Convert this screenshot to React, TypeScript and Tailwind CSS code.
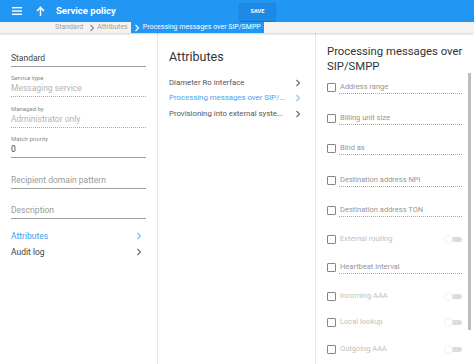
import React from "react";

const attributes = [
  { name: "Diameter Ro interface" },
  { name: "Processing messages over SIP/...", active: true },
  { name: "Provisioning into external syste..." },
];

// gap above each row keeps the uneven rhythm of the list
const options = [
  { name: "Address range", kind: "input", gap: "mt-0" },
  { name: "Billing unit size", kind: "input", gap: "mt-[17px]" },
  { name: "Bind as", kind: "input", gap: "mt-[16px]" },
  { name: "Destination address NPI", kind: "input", gap: "mt-[18px]" },
  { name: "Destination address TON", kind: "input", gap: "mt-[16px]" },
  { name: "External routing", kind: "toggle", gap: "mt-[15px]" },
  { name: "Heartbeat interval", kind: "input", gap: "mt-[14px]" },
  { name: "Incoming AAA", kind: "toggle", gap: "mt-[15px]" },
  { name: "Local lookup", kind: "toggle", gap: "mt-[12px]" },
  { name: "Outgoing AAA", kind: "toggle", gap: "mt-[13px]" },
];

const Chevron = ({ className = "" }: { className?: string }) => (
  <svg width="6" height="8" viewBox="0 0 6 8" className={className}>
    <path d="M1.5 1 L4.5 4 L1.5 7" fill="none" stroke="currentColor" strokeWidth="1.1" />
  </svg>
);

const Checkbox = () => (
  <div className="w-[9px] h-[9px] shrink-0 rounded-[1px] border border-[#858585]" />
);

const Toggle = () => (
  <div className="relative w-[18px] h-[9px] shrink-0">
    <div className="absolute left-[5px] right-0 top-[2px] h-[5px] rounded-full bg-[#dcdcdc]" />
    <div className="absolute left-0 top-0 w-[9px] h-[9px] rounded-full bg-white border border-[#f0f0f0]" />
  </div>
);

const ReadOnly = ({ label, value, gap }: { label: string; value: string; gap: string }) => (
  <div className={gap}>
    <div className="text-[6px] text-[#8a8a8a] leading-[10px]">{label}</div>
    <div className="text-[8.5px] text-[#b3b3b3] leading-[11px] pb-[2px] border-b border-dotted border-[#a8a8a8]">{value}</div>
  </div>
);

export default function App() {
  return (
    <div className="w-[474px] h-[364px] overflow-hidden bg-white flex flex-col" style={{ fontFamily: "Roboto, sans-serif" }}>
      {/* App bar */}
      <div className="h-[22px] bg-[#2196f3] flex items-center shrink-0">
        <svg width="10" height="8" viewBox="0 0 10 8" className="ml-[12px]">
          <rect x="0" y="0" width="10" height="1.4" fill="white" />
          <rect x="0" y="3.3" width="10" height="1.4" fill="white" />
          <rect x="0" y="6.6" width="10" height="1.4" fill="white" />
        </svg>
        <svg width="9" height="10" viewBox="0 0 9 10" className="ml-[14px]">
          <path d="M4.5 10 V1.5 M1 5 L4.5 1.3 L8 5" fill="none" stroke="white" strokeWidth="1.5" />
        </svg>
        <span className="ml-[11px] w-[184px] text-white font-bold text-[9.5px] leading-none">Service policy</span>
        <button className="mt-[1px] h-[18px] w-[35px] bg-[#1e88e5] shadow-[0_1px_2px_rgba(0,0,0,0.3)] text-white text-[5.5px] font-bold tracking-wide">
          SAVE
        </button>
      </div>

      {/* Breadcrumbs */}
      <div className="h-[11px] bg-[#f3f3f3] shadow-[0_1px_2px_rgba(0,0,0,0.2)] flex items-center text-[7px] text-[#a0a0a0] shrink-0 relative z-10">
        <span className="ml-[55px]">Standard</span>
        <Chevron className="ml-[6px] text-[#8a8a8a]" />
        <span className="ml-[2px]">Attributes</span>
        <div className="ml-[3px] h-full bg-[#2196f3] text-white flex items-center pl-[3px] pr-[3px]">
          <Chevron className="text-white" />
          <span className="ml-[3px]">Processing messages over SIP/SMPP</span>
        </div>
      </div>

      <div className="flex flex-1 min-h-0">
        {/* Left panel */}
        <div className="w-[158px] shrink-0 border-r border-[#e8e8e8] px-[11px] pt-[20px]">
          <div className="border-b border-[#9e9e9e] pb-[2px] text-[#444] text-[8.5px] leading-[11px]">Standard</div>
          <ReadOnly label="Service type" value="Messaging service" gap="mt-[6px]" />
          <ReadOnly label="Managed by" value="Administrator only" gap="mt-[7px]" />
          <div className="mt-[6px]">
            <div className="text-[6px] text-[#8a8a8a] leading-[10px]">Match priority</div>
            <div className="text-[8.5px] text-[#444] leading-[11px] pb-[2px] border-b border-[#9e9e9e]">0</div>
          </div>
          <div className="mt-[17px] border-b border-[#9e9e9e] pb-[2px] text-[#9a9a9a] text-[8.5px] leading-[11px]">Recipient domain pattern</div>
          <div className="mt-[16px] border-b border-[#9e9e9e] pb-[2px] text-[#9a9a9a] text-[8.5px] leading-[11px]">Description</div>
          <div className="mt-[9px] flex items-center justify-between h-[16px] text-[#3d9bec] text-[8.5px]">
            <span>Attributes</span>
            <Chevron className="text-[#7ab8f0] mr-[4px]" />
          </div>
          <div className="flex items-center justify-between h-[16px] text-[#444] text-[8.5px]">
            <span>Audit log</span>
            <Chevron className="text-[#666] mr-[4px]" />
          </div>
        </div>

        {/* Middle panel */}
        <div className="w-[158px] shrink-0 border-r border-[#e8e8e8] pl-[11px] pr-[14px] pt-[16px]">
          <div className="text-[12.5px] text-[#333] leading-[16px]">Attributes</div>
          <div className="mt-[10px]">
            {attributes.map((a) => (
              <div
                key={a.name}
                className={`flex items-center justify-between h-[15.5px] text-[7.8px] ${a.active ? "text-[#4aa2ee]" : "text-[#555]"}`}
              >
                <span>{a.name}</span>
                <Chevron className={a.active ? "text-[#8cc2f2]" : "text-[#666]"} />
              </div>
            ))}
          </div>
        </div>

        {/* Right panel */}
        <div className="flex-1 min-w-0 relative pl-[11px] pr-[12px] pt-[11px]">
          <div className="text-[11.3px] text-[#333] leading-[15px] whitespace-nowrap">
            Processing messages over
            <br />
            SIP/SMPP
          </div>
          <div className="absolute right-[3px] top-[40px] w-[3px] h-[257px] bg-[#bdbdbd]" />
          <div className="mt-[6px]">
            {options.map((o) => (
              <div key={o.name} className={`flex items-center h-[14px] ${o.gap}`}>
                <Checkbox />
                <div
                  className={`ml-[3px] flex-1 flex items-center justify-between h-[13px] text-[7.5px] ${
                    o.kind === "input" ? "border-b border-dotted border-[#a8a8a8] text-[#959595]" : "text-[#c0c0c0]"
                  }`}
                >
                  <span className="ml-[1px]">{o.name}</span>
                  {o.kind === "toggle" && <Toggle />}
                </div>
              </div>
            ))}
          </div>
        </div>
      </div>
    </div>
  );
}
